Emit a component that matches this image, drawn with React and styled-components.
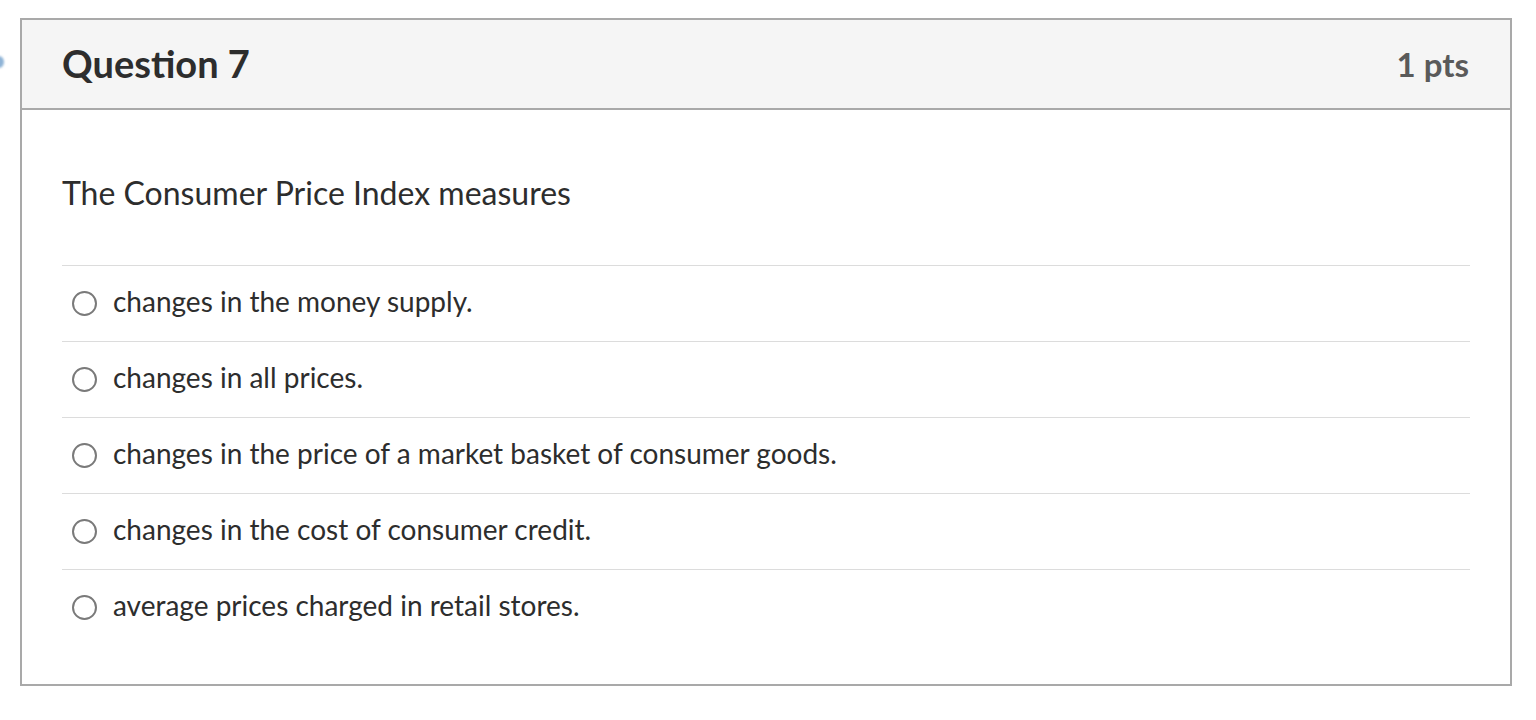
import React from "react";
import styled, { createGlobalStyle } from "styled-components";

const GlobalStyle = createGlobalStyle`
  html, body {
    margin: 0;
    padding: 0;
    background: #ffffff;
    font-family: Lato, "Open Sans", sans-serif;
    color: #2d3b45;
  }
`;

const answers = [
  "changes in the money supply.",
  "changes in all prices.",
  "changes in the price of a market basket of consumer goods.",
  "changes in the cost of consumer credit.",
  "average prices charged in retail stores.",
];

const App = () => {
  return (
    <>
      <GlobalStyle />
      <Page>
        <Marker />
        <Card>
          <Header>
            <Title>Question 7</Title>
            <Points>1 pts</Points>
          </Header>
          <Body>
            <Prompt>The Consumer Price Index measures</Prompt>
            <AnswerList>
              {answers.map((a) => (
                <Answer key={a}>
                  <Radio type="radio" name="q7" />
                  <AnswerText>{a}</AnswerText>
                </Answer>
              ))}
            </AnswerList>
          </Body>
        </Card>
      </Page>
    </>
  );
};

export default App;

const Page = styled.div`
  position: relative;
  padding: 18px 24px 0 20px;
`;

const Marker = styled.span`
  position: absolute;
  left: -6px;
  top: 56px;
  width: 10px;
  height: 12px;
  border-radius: 50%;
  background: #8eb3d6;
  filter: blur(1px);
`;

const Card = styled.div`
  border: 2px solid #a9a9a9;
  box-sizing: border-box;
  width: 1492px;
`;

const Header = styled.div`
  display: flex;
  align-items: center;
  justify-content: space-between;
  height: 88px;
  padding: 0 41px 0 40px;
  background: #f5f5f5;
  border-bottom: 2px solid #a9a9a9;
`;

const Title = styled.h2`
  margin: 0 0 2px 0;
  font-size: 38px;
  font-weight: 700;
  color: #2d2d2d;
`;

const Points = styled.span`
  font-size: 33px;
  font-weight: 700;
  color: #5a5a5a;
`;

const Body = styled.div`
  padding: 66px 40px 39px 40px;
`;

const Prompt = styled.p`
  margin: 0 0 55px 0;
  font-size: 32px;
  color: #2d2d2d;
  line-height: 34px;
`;

const AnswerList = styled.div`
  display: flex;
  flex-direction: column;
`;

const Answer = styled.label`
  display: flex;
  align-items: center;
  gap: 16px;
  height: 75px;
  padding-left: 10px;
  border-top: 1px solid #dcdcdc;
  font-size: 28px;
  color: #2d2d2d;
`;

const Radio = styled.input`
  appearance: none;
  margin: 0;
  width: 25px;
  height: 25px;
  border: 2px solid #7a7a7a;
  border-radius: 50%;
  background: #fff;
  box-sizing: border-box;
`;

const AnswerText = styled.span`
  margin-bottom: 6px;
`;
